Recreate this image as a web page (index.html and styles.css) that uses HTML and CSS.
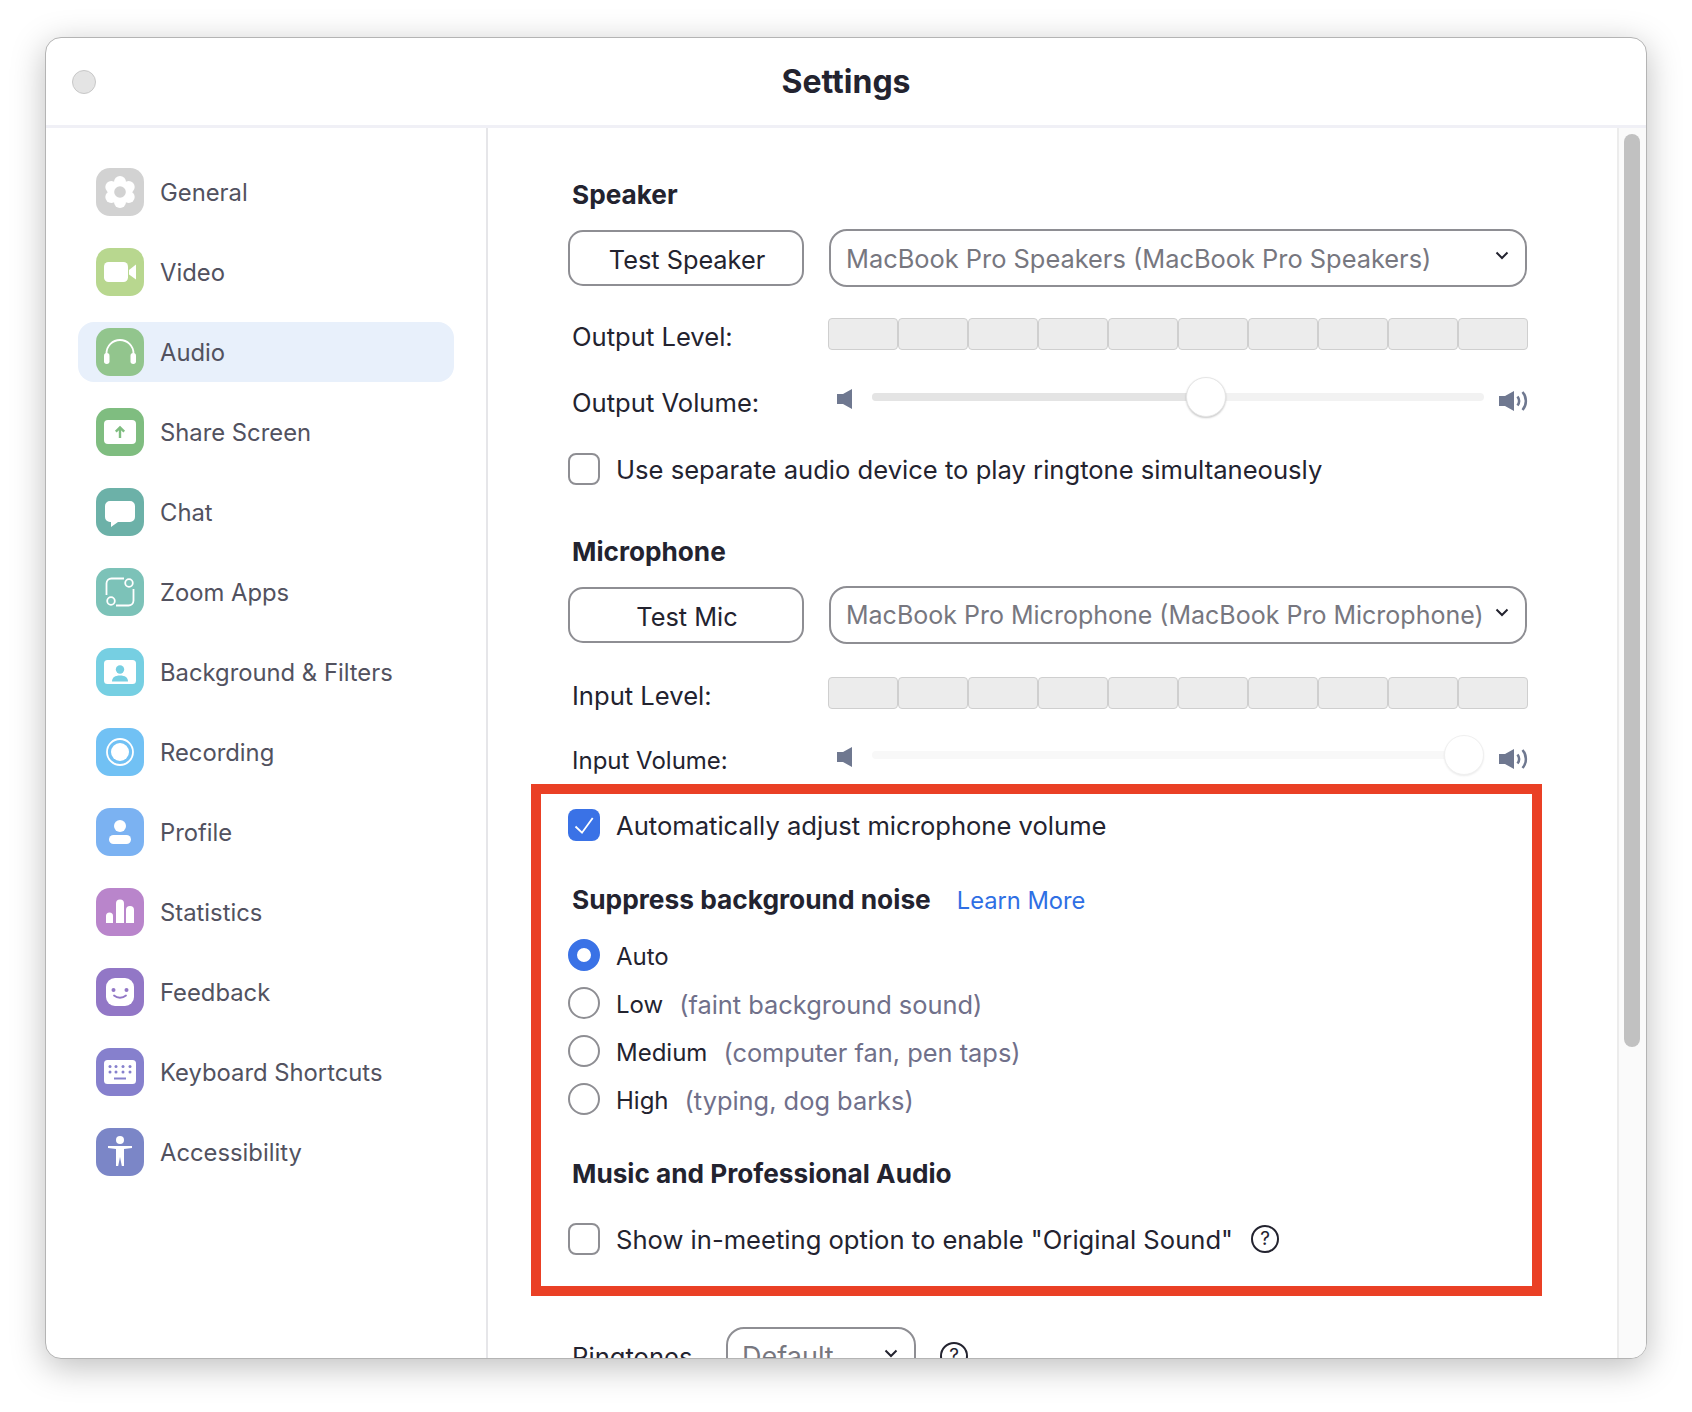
FILE: index.html
```html
<!DOCTYPE html>
<html lang="en">
<head>
<meta charset="utf-8">
<title>Settings</title>
<link rel="stylesheet" href="styles.css">
</head>
<body>
<div class="window">
  <header class="titlebar">
    <div class="titlebar-left"><span class="traffic"></span></div>
    <h1 class="title">Settings</h1>
    <div></div>
  </header>
  <div class="main">
    <nav class="sidebar">
      <a class="nav-item"><span class="nav-icon i-general"><svg viewBox="0 0 48 48"><g fill="#fff"><circle cx="24" cy="14" r="6"/><circle cx="24" cy="34" r="6"/><circle cx="15.3" cy="19" r="6"/><circle cx="32.7" cy="19" r="6"/><circle cx="15.3" cy="29" r="6"/><circle cx="32.7" cy="29" r="6"/><circle cx="24" cy="24" r="10"/></g><circle cx="24" cy="24" r="5.8" fill="#d2d2d2"/></svg></span><span>General</span></a>
      <a class="nav-item"><span class="nav-icon i-video"><svg viewBox="0 0 48 48"><rect x="8" y="14" width="24" height="20" rx="4.5" fill="#fff"/><path d="M33 22 40 16.5V31.500L33 26.500Z" fill="#fff"/></svg></span><span>Video</span></a>
      <a class="nav-item active"><span class="nav-icon i-audio"><svg viewBox="0 0 48 48"><path d="M10.500 28V25.500a13.500 13.500 0 0 1 27 0v2.500" fill="none" stroke="#fff" stroke-width="1.800"/><rect x="8" y="25" width="5.500" height="11" rx="2.700" fill="#fff"/><rect x="34.500" y="25" width="5.500" height="11" rx="2.700" fill="#fff"/></svg></span><span>Audio</span></a>
      <a class="nav-item"><span class="nav-icon i-share"><svg viewBox="0 0 48 48"><rect x="8" y="12" width="32" height="24" rx="4" fill="#fff"/><path d="M24 30V19.500M19.800 23.700l4.200-4.200 4.200 4.200" fill="none" stroke="#7fbd80" stroke-width="2.400"/></svg></span><span>Share Screen</span></a>
      <a class="nav-item"><span class="nav-icon i-chat"><svg viewBox="0 0 48 48"><path d="M14 13H34a5 5 0 0 1 5 5V29a5 5 0 0 1-5 5H22L15 39V34H14a5 5 0 0 1-5-5V18a5 5 0 0 1 5-5Z" fill="#fff"/></svg></span><span>Chat</span></a>
      <a class="nav-item"><span class="nav-icon i-apps"><svg viewBox="0 0 48 48"><g fill="none" stroke="#fff" stroke-width="1.800"><path d="M10.500 27V15.500a5 5 0 0 1 5-5H28"/><path d="M37.500 21V32.500a5 5 0 0 1-5 5H20"/><circle cx="33" cy="15" r="3.800"/><circle cx="15" cy="33" r="3.800"/></g></svg></span><span>Zoom Apps</span></a>
      <a class="nav-item"><span class="nav-icon i-bg"><svg viewBox="0 0 48 48"><rect x="8" y="12" width="32" height="24" rx="3.500" fill="#fff"/><circle cx="24" cy="21.500" r="4.200" fill="#76cfe2"/><path d="M16 33.500c0-4 3-6 8-6s8 2 8 6Z" fill="#76cfe2"/></svg></span><span>Background &amp; Filters</span></a>
      <a class="nav-item"><span class="nav-icon i-rec"><svg viewBox="0 0 48 48"><circle cx="24" cy="24" r="13" fill="none" stroke="#fff" stroke-width="1.800"/><circle cx="24" cy="24" r="9" fill="#fff"/></svg></span><span>Recording</span></a>
      <a class="nav-item"><span class="nav-icon i-profile"><svg viewBox="0 0 48 48"><circle cx="24" cy="18" r="6" fill="#fff"/><rect x="13" y="27" width="22" height="9" rx="4.500" fill="#fff"/></svg></span><span>Profile</span></a>
      <a class="nav-item"><span class="nav-icon i-stats"><svg viewBox="0 0 48 48"><g fill="#fff"><path d="M10 35V28a3.500 3.500 0 0 1 7 0v7Z"/><path d="M20 35V15.500a4 4 0 0 1 8 0V35Z"/><path d="M30 35V22a4 4 0 0 1 8 0V35Z"/></g></svg></span><span>Statistics</span></a>
      <a class="nav-item"><span class="nav-icon i-feedback"><svg viewBox="0 0 48 48"><rect x="10" y="10" width="28" height="28" rx="9" fill="#fff"/><circle cx="17.500" cy="22" r="2" fill="#9277c6"/><circle cx="30.500" cy="22" r="2" fill="#9277c6"/><path d="M18 27.500c3.500 3 8.500 3 12 0" fill="none" stroke="#9277c6" stroke-width="1.800" stroke-linecap="round"/></svg></span><span>Feedback</span></a>
      <a class="nav-item"><span class="nav-icon i-keys"><svg viewBox="0 0 48 48"><rect x="8" y="12" width="32" height="24" rx="3.500" fill="#fff"/><g fill="#8680cd"><circle cx="14" cy="18.500" r="1.500"/><circle cx="20" cy="18.500" r="1.500"/><circle cx="27" cy="18.500" r="1.500"/><circle cx="34" cy="18.500" r="1.500"/><circle cx="14" cy="24" r="1.500"/><circle cx="20" cy="24" r="1.500"/><circle cx="27" cy="24" r="1.500"/><circle cx="34" cy="24" r="1.500"/><rect x="18" y="29.500" width="12" height="2"/></g></svg></span><span>Keyboard Shortcuts</span></a>
      <a class="nav-item"><span class="nav-icon i-access"><svg viewBox="0 0 48 48"><g fill="#fff"><circle cx="24" cy="12" r="4"/><path d="M12 18H36V20L28 21V38H25.800L24 29L22.200 38H20V21L12 20Z"/></g></svg></span><span>Accessibility</span></a>
    </nav>
    <section class="content">
      <h2 class="heading first">Speaker</h2>
      <div class="device-row">
        <button class="btn">Test Speaker</button>
        <div class="select"><span>MacBook Pro Speakers (MacBook Pro Speakers)</span><svg class="chevron" viewBox="0 0 14 9"><path d="M1.500 1.500 7 7l5.500-5.500" fill="none" stroke="#23232f" stroke-width="2"/></svg></div>
      </div>
      <div class="level-row">
        <span class="label">Output Level:</span>
        <div class="meter"><i></i><i></i><i></i><i></i><i></i><i></i><i></i><i></i><i></i><i></i></div>
      </div>
      <div class="volume-row">
        <span class="label">Output Volume:</span>
        <svg class="spk-low" viewBox="0 0 15 20"><path d="M0 5H6L15 0V20L6 15H0Z" fill="#6f7890"/></svg>
        <div class="track"><div class="fill" style="width:54.600%"></div><span class="knob" style="left:54.600%"></span></div>
        <svg class="spk-high" viewBox="0 0 29 20"><path d="M0 5H6L15 0V20L6 15H0Z" fill="#6f7890"/><path d="M18.500 5.500c2.200 3 2.200 6 0 9M23.500 1c4.500 5 4.500 13 0 18" fill="none" stroke="#6f7890" stroke-width="2.500"/></svg>
      </div>
      <label class="check-row ring">
        <span class="check"></span><span>Use separate audio device to play ringtone simultaneously</span>
      </label>

      <h2 class="heading mic">Microphone</h2>
      <div class="device-row">
        <button class="btn">Test Mic</button>
        <div class="select mic-select"><span>MacBook Pro Microphone (MacBook Pro Microphone)</span><svg class="chevron" viewBox="0 0 14 9"><path d="M1.500 1.500 7 7l5.500-5.500" fill="none" stroke="#23232f" stroke-width="2"/></svg></div>
      </div>
      <div class="level-row input">
        <span class="label">Input Level:</span>
        <div class="meter"><i></i><i></i><i></i><i></i><i></i><i></i><i></i><i></i><i></i><i></i></div>
      </div>
      <div class="volume-row input">
        <span class="label">Input Volume:</span>
        <svg class="spk-low" viewBox="0 0 15 20"><path d="M0 5H6L15 0V20L6 15H0Z" fill="#6f7890"/></svg>
        <div class="track light"><span class="knob light" style="left:96.700%"></span></div>
        <svg class="spk-high" viewBox="0 0 29 20"><path d="M0 5H6L15 0V20L6 15H0Z" fill="#6f7890"/><path d="M18.500 5.500c2.200 3 2.200 6 0 9M23.500 1c4.500 5 4.500 13 0 18" fill="none" stroke="#6f7890" stroke-width="2.500"/></svg>
      </div>

      <div class="highlight">
        <label class="check-row auto">
          <span class="check on"><svg viewBox="0 0 32 32"><path d="M7.500 17.500 14 23.700 24.700 9" fill="none" stroke="#fff" stroke-width="1.800"/></svg></span><span>Automatically adjust microphone volume</span>
        </label>
        <div class="heading-line">
          <h2 class="heading suppress">Suppress background noise</h2>
          <a class="link">Learn More</a>
        </div>
        <div class="radios">
          <label class="radio-row"><span class="radio on"></span><span class="radio-text">Auto</span></label>
          <label class="radio-row"><span class="radio"></span><span class="radio-text">Low</span><span class="hint">(faint background sound)</span></label>
          <label class="radio-row"><span class="radio"></span><span class="radio-text">Medium</span><span class="hint">(computer fan, pen taps)</span></label>
          <label class="radio-row"><span class="radio"></span><span class="radio-text">High</span><span class="hint">(typing, dog barks)</span></label>
        </div>
        <h2 class="heading music">Music and Professional Audio</h2>
        <label class="check-row original">
          <span class="check"></span><span>Show in-meeting option to enable "Original Sound"</span>
          <span class="help">?</span>
        </label>
      </div>

      <div class="ringtone-row">
        <span class="ring-label">Ringtones</span>
        <div class="select small"><span>Default</span><svg class="chevron" viewBox="0 0 14 9"><path d="M1.500 1.500 7 7l5.500-5.500" fill="none" stroke="#23232f" stroke-width="2"/></svg></div>
        <span class="help low">?</span>
      </div>
    </section>
    <aside class="scrollbar"><div class="thumb"></div></aside>
  </div>
</div>
</body>
</html>
```
FILE: styles.css
```css
* { box-sizing: border-box; }
html, body { margin: 0; height: 1412px; background: #fff; overflow: hidden; }
body {
  padding: 37px 45px 53px;
  font-family: Inter, "Liberation Sans", sans-serif;
  font-size: 25.6px;
  color: #23232f;
}
.window {
  width: 1602px;
  height: 1322px;
  background: #fff;
  border: 1px solid #b4b4b4;
  border-radius: 16px;
  box-shadow: 0 8px 34px rgba(0,0,0,.26);
  display: flex;
  flex-direction: column;
  overflow: hidden;
}
.titlebar {
  flex: none;
  height: 90px;
  border-bottom: 3px solid #f0f0f6;
  display: grid;
  grid-template-columns: 1fr auto 1fr;
  align-items: center;
  padding: 0 26px;
}
.traffic {
  display: block;
  width: 24px;
  height: 24px;
  border-radius: 50%;
  background: #e4e4e4;
  border: 1px solid #c8c8c8;
}
.title { margin: 0; font-size: 32px; font-weight: 700; color: #23232f; }
.main { flex: 1; display: flex; min-height: 0; }

/* sidebar */
.sidebar {
  flex: none;
  width: 442px;
  border-right: 2px solid #e6e6e9;
  padding: 34px 0 0 32px;
  display: flex;
  flex-direction: column;
  gap: 20px;
}
.nav-item {
  width: 376px;
  height: 60px;
  padding-left: 18px;
  display: flex;
  align-items: center;
  gap: 16px;
  border-radius: 16px;
  color: #52525f;
  font-size: 23.8px;
}
.nav-item.active { background: #e8f0fb; }
.nav-icon { width: 48px; height: 48px; border-radius: 14px; display: block; flex: none; }
.nav-icon svg { display: block; width: 48px; height: 48px; }
.i-general { background: #d2d2d2; }
.i-video { background: #b8d78f; }
.i-audio { background: #92c58d; }
.i-share { background: #7fbd80; }
.i-chat { background: #6cb1a8; }
.i-apps { background: #7cc2b8; }
.i-bg { background: #76cfe2; }
.i-rec { background: #71c1f4; }
.i-profile { background: #7bb2f2; }
.i-stats { background: #b985cb; }
.i-feedback { background: #9277c6; }
.i-keys { background: #8680cd; }
.i-access { background: #7b86c7; }

/* content */
.content {
  flex: 1;
  min-width: 0;
  padding: 51px 89px 0 80px;
  overflow: hidden;
}
.heading { margin: 0; height: 32px; line-height: 32px; font-size: 26.2px; font-weight: 700; padding-left: 4px; color: #23232f; white-space: nowrap; }
.heading.suppress { font-size: 26.3px; }
.device-row { display: flex; align-items: center; gap: 25px; height: 58px; margin-top: 18px; }
.btn {
  flex: none;
  width: 236px;
  height: 56px;
  background: #fff;
  border: 2px solid #8e8e93;
  border-radius: 15px;
  font: inherit;
  font-size: 25.3px;
  color: #23232f;
  padding: 2px 0 0 2px;
}
.select {
  flex: 1;
  min-width: 0;
  height: 58px;
  margin-right: 1px;
  border: 2px solid #8e8e93;
  border-radius: 18px;
  padding: 0 16px 0 15px;
  display: flex;
  align-items: center;
  justify-content: space-between;
  color: #77777f;
  font-size: 25.4px;
  white-space: nowrap;
}
.select.mic-select { font-size: 25px; }
.chevron { width: 14px; height: 9px; margin: -6px 0 0; flex: none; }
.level-row { display: flex; align-items: flex-start; margin-top: 31px; height: 38px; }
.level-row.input { margin-top: 33px; }
.label { flex: none; width: 260px; padding-left: 4px; line-height: 32px; margin-top: 3px; }
.meter { flex: 1; display: flex; height: 32px; }
.meter i { flex: 1; background: #ececec; border: 1px solid #cfcfcf; border-radius: 4px; }
.volume-row { display: flex; align-items: flex-start; margin-top: 21px; height: 42px; }
.volume-row .label { margin-top: 10px; }
.volume-row.input .label { font-size: 24px; }
.spk-low { flex: none; width: 15px; height: 20px; margin: 12px 0 0 9px; }
.spk-high { flex: none; width: 29px; height: 20px; margin: 14px 0 0 15px; }
.track { position: relative; flex: 1; height: 8px; margin: 16px 0 0 20px; background: #f2f2f2; border-radius: 4px; }
.track.light { background: #f8f8f8; }
.fill { height: 8px; background: #e4e4e4; border-radius: 4px 0 0 4px; }
.knob {
  position: absolute;
  top: -16px;
  width: 40px;
  height: 40px;
  margin-left: -20px;
  border-radius: 50%;
  background: #fff;
  border: 1px solid #e6e6e6;
  box-shadow: 0 1px 2px rgba(0,0,0,.22);
}
.knob.light { border-color: #f0f0f0; box-shadow: 0 1px 2px rgba(0,0,0,.08); }
.check-row { display: flex; align-items: center; gap: 16px; height: 32px; }
.check-row.ring { margin-top: 34px; }
.check { flex: none; width: 32px; height: 32px; border: 2px solid #8e8e93; border-radius: 8px; background: #fff; display: block; }
.check.on { background: #3a72e6; border: 0; }
.check svg { display: block; width: 32px; height: 32px; }
.heading.mic { margin-top: 51px; }
.volume-row.input { margin-top: 20px; }

/* highlight */
.highlight {
  margin: 7px -14px 0 -37px;
  height: 512px;
  border: 10px solid #ea4025;
  padding: 15px 27px 0;
}
.heading-line { display: flex; align-items: center; gap: 26px; margin-top: 43px; }
.link { color: #2f6fe4; font-size: 23.7px; }
.radios { margin-top: 23px; display: flex; flex-direction: column; gap: 16px; }
.radio-row { display: flex; align-items: center; height: 32px; gap: 16px; }
.radio { flex: none; width: 32px; height: 32px; border-radius: 50%; border: 2px solid #8e8e93; background: #fff; }
.radio.on { border: 9px solid #3a72e6; }
.radio-text { font-size: 24px; padding-top: 2px; }
.hint { color: #70708a; font-size: 25.4px; padding-top: 2px; }
.heading.music { margin-top: 43px; }
.check-row.original { margin-top: 33px; }
.help {
  flex: none;
  width: 28px;
  height: 28px;
  border-radius: 50%;
  border: 2px solid #23232f;
  font-size: 19px;
  line-height: 24px;
  text-align: center;
  margin-left: 2px;
}
.ringtone-row { display: flex; align-items: center; height: 58px; margin-top: 31px; }
.ring-label { flex: none; width: 158px; padding-left: 4px; }
.select.small { flex: none; width: 190px; margin: 0; font-size: 27px; padding-left: 14px; }
.help.low { margin-left: 24px; }

/* scrollbar */
.scrollbar { flex: none; width: 29px; background: #fafafa; border-left: 2px solid #ececec; padding: 6px 0 0 5px; }
.thumb { width: 16px; height: 913px; border-radius: 8px; background: #c1c1c1; }
```
